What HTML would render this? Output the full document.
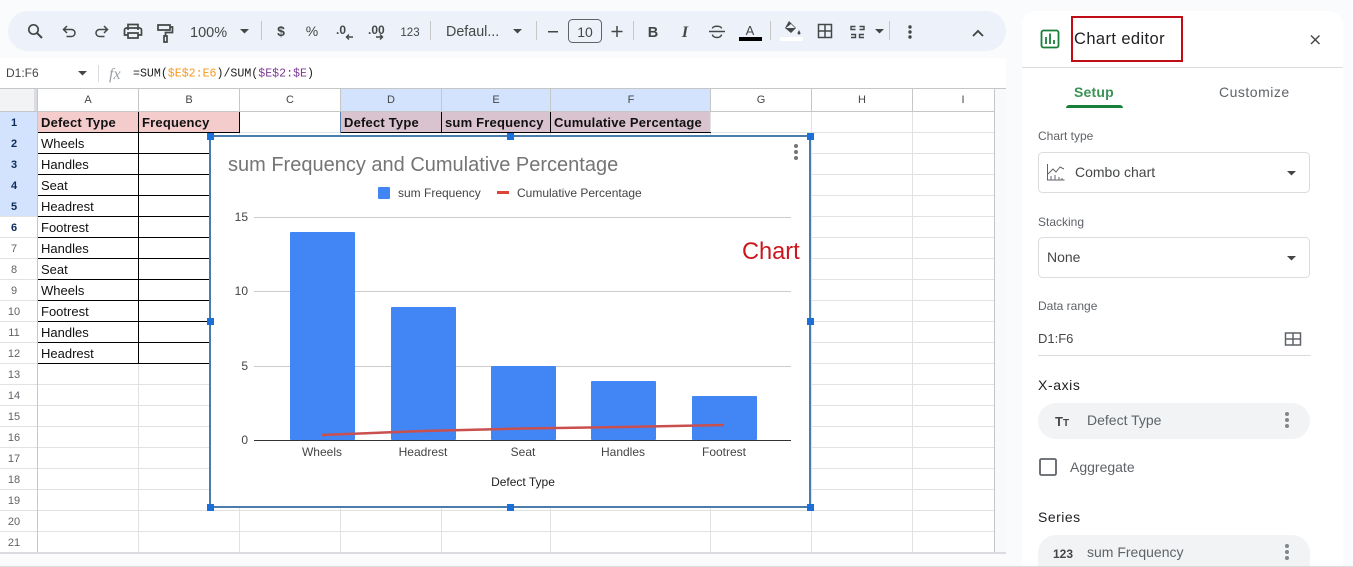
<!DOCTYPE html>
<html><head><meta charset="utf-8"><style>
html,body{margin:0;padding:0;background:#f9fbfd;width:1353px;height:567px;overflow:hidden}
svg{display:block;font-family:"Liberation Sans",sans-serif}
.hd{font-size:11px;fill:#444746;text-anchor:middle}
.rn{font-size:11px;fill:#5f6368;text-anchor:middle}
.rb{font-size:11px;fill:#0b2a5a;font-weight:bold;text-anchor:middle}
.c{font-size:13px;fill:#111}
.cb{font-size:13px;fill:#111;font-weight:bold;letter-spacing:.2px}
.ic{fill:none;stroke:#444746;stroke-width:1.7}
.lb{font-size:12px;fill:#5f6368}
.ax{font-size:12px;fill:#444}
</style></head><body>
<svg width="1353" height="567" viewBox="0 0 1353 567" xmlns="http://www.w3.org/2000/svg">
<rect width="1353" height="567" fill="#f9fbfd"/>
<!-- toolbar -->
<rect x="8" y="11" width="998" height="40" rx="20" fill="#edf2fa"/>
<g class="ic">
<circle cx="33.5" cy="29.5" r="4.7"/><path d="M37 33l5 5" stroke-width="2"/>
<path d="M67 26l-3.500 3.500 3.500 3.500M64 29.500h7.500a3.500 3.500 0 0 1 0 7h-5" stroke-width="1.500"/>
<path d="M104 26l3.500 3.500-3.500 3.500M107 29.500h-7.500a3.500 3.500 0 0 0 0 7h5" stroke-width="1.500"/>
<path d="M128 30v-5.500h10v5.500M128 35h-3.500v-5a2 2 0 0 1 2-2h13a2 2 0 0 1 2 2v5H138M128 33h10v5h-10z"/>
<path d="M158 25h12v5h-12zM170 27h2.500v5.500h-7v3.500M164 36h3v6h-3z"/>
</g>
<text x="190" y="37" font-size="14.500" fill="#444746">100%</text>
<path d="M240 29h9l-4.500 4.500z" fill="#444746"/>
<rect x="261" y="21" width="1" height="19" fill="#c7c7c7"/>
<text x="281" y="36" font-size="14" font-weight="bold" fill="#444746" text-anchor="middle">$</text>
<text x="312" y="36" font-size="14" fill="#444746" text-anchor="middle">%</text>
<text x="336" y="34" font-size="12" font-weight="bold" fill="#444746">.0</text>
<path d="M353 37h-6M349 34.500l-2.500 2.500 2.500 2.500" fill="none" stroke="#444746" stroke-width="1.400"/>
<text x="368" y="34" font-size="12" font-weight="bold" fill="#444746">.00</text>
<path d="M376 37h6M380 34.500l2.500 2.500-2.500 2.500" fill="none" stroke="#444746" stroke-width="1.400"/>
<text x="410" y="36" font-size="11.500" fill="#444746" text-anchor="middle">123</text>
<rect x="430" y="21" width="1" height="19" fill="#c7c7c7"/>
<text x="446" y="36" font-size="14.300" fill="#444746">Defaul...</text>
<path d="M513 29h9l-4.500 4.500z" fill="#444746"/>
<rect x="536" y="21" width="1" height="19" fill="#c7c7c7"/>
<rect x="548" y="31" width="10" height="1.500" fill="#444746"/>
<rect x="568.500" y="19.500" width="33" height="23" rx="4" fill="none" stroke="#5f6368"/>
<text x="585" y="37" font-size="14" fill="#444746" text-anchor="middle">10</text>
<path d="M617 26v11M611.500 31.500h11" stroke="#444746" stroke-width="1.500" fill="none"/>
<rect x="633" y="21" width="1" height="19" fill="#c7c7c7"/>
<text x="653" y="37" font-size="14.500" font-weight="bold" fill="#444746" text-anchor="middle">B</text>
<text x="685" y="37" font-size="16" font-weight="bold" font-style="italic" font-family="Liberation Serif" fill="#444746" text-anchor="middle">I</text>
<path d="M709 31.500h16M712.500 28.500c0-3 9-3 9 0M712.500 34.500c0 4 9 4 9 0" stroke="#444746" stroke-width="1.400" fill="none"/>
<text x="750" y="35" font-size="13" fill="#444746" text-anchor="middle">A</text>
<rect x="739" y="37" width="23" height="4" fill="#000"/>
<rect x="770" y="21" width="1" height="19" fill="#c7c7c7"/>
<path d="M789 21l7 7-5 5-6-5zM799 30l1.500 3a1.500 1.500 0 1 1-3 0z" fill="#444746"/>
<path d="M786 28l5-4 4 4z" fill="#edf2fa"/>
<rect x="780" y="37" width="23" height="4" rx="1" fill="#fff"/>
<path d="M818.500 24.500h13v13h-13zM825 24.500v13M818.500 31h13" stroke="#444746" stroke-width="1.500" fill="none"/>
<path d="M855.500 26.500h-4.500v3h4.500M851 37.500h4.500v-3h-4.500M859.500 26.500h4.500v3h-4.500M864 37.500h-4.500v-3h4.500" stroke="#444746" stroke-width="1.400" fill="none"/>
<path d="M875 29h9l-4.500 4.500z" fill="#444746"/>
<rect x="889" y="21" width="1" height="19" fill="#c7c7c7"/>
<g fill="#444746"><circle cx="910" cy="27" r="1.700"/><circle cx="910" cy="32" r="1.700"/><circle cx="910" cy="37" r="1.700"/></g>
<path d="M973 36l5-5 5 5" stroke="#444746" stroke-width="1.900" fill="none"/>

<!-- formula bar -->
<rect x="0" y="58" width="1006" height="30" fill="#fff"/>
<text x="6" y="77" font-size="12" fill="#444746">D1:F6</text>
<path d="M78 71h9l-4.500 4.500z" fill="#444746"/>
<rect x="98" y="65" width="1" height="17" fill="#dadce0"/>
<text x="109" y="79" font-size="16" font-style="italic" font-family="Liberation Serif" fill="#9aa0a6">fx</text>
<text x="133" y="76.500" font-family="Liberation Mono" font-size="11.600" fill="#222">=SUM(<tspan fill="#f7981d">$E$2:E6</tspan>)/SUM(<tspan fill="#7e3794">$E$2:$E</tspan>)</text>

<!-- sheet -->
<rect x="0" y="88" width="995" height="465" fill="#fff"/>
<rect x="995" y="88" width="11" height="465" fill="#f8f9fa"/>
<rect x="0" y="88" width="34" height="23" fill="#f1f3f4"/>
<rect x="34" y="88" width="4" height="23" fill="#dadce0"/>
<rect x="341" y="89" width="370" height="22" fill="#d3e3fd"/>
<rect x="0" y="111" width="37" height="105" fill="#d3e3fd"/>
<rect x="0" y="88" width="1006" height="1" fill="#c4c7c5"/>
<rect x="0" y="111" width="995" height="1" fill="#c4c7c5"/>
<g fill="#c4c7c5">
<rect x="138" y="89" width="1" height="22"/><rect x="239" y="89" width="1" height="22"/><rect x="340" y="89" width="1" height="22"/><rect x="441" y="89" width="1" height="22"/><rect x="550" y="89" width="1" height="22"/><rect x="710" y="89" width="1" height="22"/><rect x="811" y="89" width="1" height="22"/><rect x="912" y="89" width="1" height="22"/><rect x="994" y="89" width="1" height="464"/>
<rect x="37" y="89" width="1" height="464"/>
</g>
<!-- grid -->
<g fill="#e1e3e1">
<rect x="0" y="216" width="37" height="1"/><rect x="0" y="237" width="37" height="1"/><rect x="0" y="258" width="37" height="1"/><rect x="0" y="279" width="37" height="1"/><rect x="0" y="300" width="37" height="1"/><rect x="0" y="321" width="37" height="1"/><rect x="0" y="342" width="37" height="1"/>
<rect x="0" y="363" width="37" height="1"/><rect x="0" y="384" width="37" height="1"/><rect x="0" y="405" width="37" height="1"/><rect x="0" y="426" width="37" height="1"/><rect x="0" y="447" width="37" height="1"/><rect x="0" y="468" width="37" height="1"/><rect x="0" y="489" width="37" height="1"/><rect x="0" y="510" width="37" height="1"/><rect x="0" y="531" width="37" height="1"/>
<rect x="38" y="132" width="956" height="1"/><rect x="38" y="153" width="956" height="1"/><rect x="38" y="174" width="956" height="1"/><rect x="38" y="195" width="956" height="1"/><rect x="38" y="216" width="956" height="1"/><rect x="38" y="237" width="956" height="1"/><rect x="38" y="258" width="956" height="1"/><rect x="38" y="279" width="956" height="1"/><rect x="38" y="300" width="956" height="1"/><rect x="38" y="321" width="956" height="1"/><rect x="38" y="342" width="956" height="1"/><rect x="38" y="363" width="956" height="1"/><rect x="38" y="384" width="956" height="1"/><rect x="38" y="405" width="956" height="1"/><rect x="38" y="426" width="956" height="1"/><rect x="38" y="447" width="956" height="1"/><rect x="38" y="468" width="956" height="1"/><rect x="38" y="489" width="956" height="1"/><rect x="38" y="510" width="956" height="1"/><rect x="38" y="531" width="956" height="1"/>
<rect x="138" y="112" width="1" height="441"/><rect x="239" y="112" width="1" height="441"/><rect x="340" y="112" width="1" height="441"/><rect x="441" y="112" width="1" height="441"/><rect x="550" y="112" width="1" height="441"/><rect x="710" y="112" width="1" height="441"/><rect x="811" y="112" width="1" height="441"/><rect x="912" y="112" width="1" height="441"/>
</g>
<!-- headers -->
<text class="hd" x="88" y="103">A</text><text class="hd" x="189" y="103">B</text><text class="hd" x="290" y="103">C</text><text class="hd" x="391" y="103" fill="#0b2a5a">D</text><text class="hd" x="496" y="103">E</text><text class="hd" x="631" y="103">F</text><text class="hd" x="761" y="103">G</text><text class="hd" x="862" y="103">H</text><text class="hd" x="963" y="103">I</text>
<text class="rb" x="14" y="126">1</text><text class="rb" x="14" y="147">2</text><text class="rb" x="14" y="168">3</text><text class="rb" x="14" y="189">4</text><text class="rb" x="14" y="210">5</text><text class="rb" x="14" y="231">6</text>
<text class="rn" x="14" y="252">7</text><text class="rn" x="14" y="273">8</text><text class="rn" x="14" y="294">9</text><text class="rn" x="14" y="315">10</text><text class="rn" x="14" y="336">11</text><text class="rn" x="14" y="357">12</text><text class="rn" x="14" y="378">13</text><text class="rn" x="14" y="399">14</text><text class="rn" x="14" y="420">15</text><text class="rn" x="14" y="441">16</text><text class="rn" x="14" y="462">17</text><text class="rn" x="14" y="483">18</text><text class="rn" x="14" y="504">19</text><text class="rn" x="14" y="525">20</text><text class="rn" x="14" y="546">21</text>
<!-- fills -->
<rect x="38" y="112" width="201" height="20" fill="#f4cccc"/>
<rect x="341" y="112" width="369" height="20" fill="#d9c3cf"/>
<rect x="340" y="112" width="1" height="21" fill="#5a7fb0"/>
<g fill="#000">
<rect x="38" y="132" width="201" height="1"/><rect x="341" y="132" width="370" height="1"/>
<rect x="138" y="112" width="1" height="252"/><rect x="239" y="112" width="1" height="21"/><rect x="441" y="112" width="1" height="21"/><rect x="550" y="112" width="1" height="21"/>
<rect x="38" y="153" width="172" height="1"/><rect x="38" y="174" width="172" height="1"/><rect x="38" y="195" width="172" height="1"/><rect x="38" y="216" width="172" height="1"/><rect x="38" y="237" width="172" height="1"/><rect x="38" y="258" width="172" height="1"/><rect x="38" y="279" width="172" height="1"/><rect x="38" y="300" width="172" height="1"/><rect x="38" y="321" width="172" height="1"/><rect x="38" y="342" width="172" height="1"/><rect x="38" y="363" width="172" height="1"/>
</g>
<text class="cb" x="41" y="127">Defect Type</text><text class="cb" x="142" y="127">Frequency</text><text class="cb" x="344" y="127">Defect Type</text><text class="cb" x="445" y="127">sum Frequency</text><text class="cb" x="554" y="127">Cumulative Percentage</text>
<text class="c" x="41" y="148">Wheels</text><text class="c" x="41" y="169">Handles</text><text class="c" x="41" y="190">Seat</text><text class="c" x="41" y="211">Headrest</text><text class="c" x="41" y="232">Footrest</text><text class="c" x="41" y="253">Handles</text><text class="c" x="41" y="274">Seat</text><text class="c" x="41" y="295">Wheels</text><text class="c" x="41" y="316">Footrest</text><text class="c" x="41" y="337">Handles</text><text class="c" x="41" y="358">Headrest</text>
<!-- bottom strip -->
<rect x="0" y="552" width="1006" height="2" fill="#dadce0"/>
<rect x="0" y="554" width="1006" height="12" fill="#fbfbfb"/>
<rect x="0" y="566" width="1353" height="1" fill="#dadce0"/>
<!-- chart -->
<rect x="210" y="136" width="600" height="371" fill="#fff" stroke="#4a7dab" stroke-width="2"/>
<text x="228" y="171" font-size="20" fill="#757575">sum Frequency and Cumulative Percentage</text>
<g fill="#757575"><circle cx="796" cy="146" r="2"/><circle cx="796" cy="152" r="2"/><circle cx="796" cy="158" r="2"/></g>
<rect x="378" y="187" width="12" height="12" rx="1" fill="#4285f4"/>
<text class="ax" x="398" y="197" fill="#333">sum Frequency</text>
<rect x="497" y="191" width="12" height="3" fill="#db4437"/>
<text class="ax" x="517" y="197">Cumulative Percentage</text>
<g fill="#ccc"><rect x="254" y="217" width="537" height="1"/><rect x="254" y="291" width="537" height="1"/><rect x="254" y="366" width="537" height="1"/></g>
<g class="ax" text-anchor="end"><text x="248" y="221">15</text><text x="248" y="295">10</text><text x="248" y="370">5</text><text x="248" y="444">0</text></g>
<g fill="#4285f4"><rect x="290" y="232" width="65" height="208" rx="1"/><rect x="391" y="307" width="65" height="133" rx="1"/><rect x="491" y="366" width="65" height="74" rx="1"/><rect x="591" y="381" width="65" height="59" rx="1"/><rect x="692" y="396" width="65" height="44" rx="1"/></g>
<rect x="254" y="440" width="537" height="1" fill="#333"/>
<path d="M322 435L423 431 523 428.500 623 427 724 425" fill="none" stroke="#c9504f" stroke-width="2.500"/>
<g class="ax" text-anchor="middle"><text x="322" y="456">Wheels</text><text x="423" y="456">Headrest</text><text x="523" y="456">Seat</text><text x="623" y="456">Handles</text><text x="724" y="456">Footrest</text><text x="523" y="486" fill="#222">Defect Type</text></g>
<text x="742" y="259" font-size="23.600" fill="#c9181e">Chart</text>
<g fill="#1a6fd8"><rect x="207" y="133" width="7" height="7"/><rect x="507" y="133" width="7" height="7"/><rect x="807" y="133" width="7" height="7"/><rect x="207" y="318" width="7" height="7"/><rect x="807" y="318" width="7" height="7"/><rect x="207" y="504" width="7" height="7"/><rect x="507" y="504" width="7" height="7"/><rect x="807" y="504" width="7" height="7"/></g>

<!-- side panel -->
<path d="M1022 566V25a14 14 0 0 1 14-14h293a14 14 0 0 1 14 14v541z" fill="#fff"/>
<rect x="1022" y="67" width="321" height="1" fill="#dadce0"/>
<rect x="1041.500" y="30.500" width="17" height="17" rx="2" fill="none" stroke="#188038" stroke-width="1.800"/>
<path d="M1046 37v7M1050 33.500v10.500M1054 40v4" stroke="#188038" stroke-width="1.800"/>
<text x="1074" y="44" font-size="16.500" fill="#202124" letter-spacing=".4">Chart editor</text>
<rect x="1072" y="17" width="110" height="44" fill="none" stroke="#c00c14" stroke-width="2"/>
<path d="M1311 35.500l8.500 8.500M1319.500 35.500l-8.500 8.500" stroke="#444746" stroke-width="1.400"/>
<text x="1074" y="97" font-size="14" font-weight="bold" fill="#188038" opacity=".85" letter-spacing=".2">Setup</text>
<path d="M1066 108a3 3 0 0 1 3-3h51a3 3 0 0 1 3 3z" fill="#188038"/>
<text x="1219" y="97" font-size="14" fill="#5f6368" letter-spacing=".5">Customize</text>
<text class="lb" x="1038" y="140">Chart type</text>
<rect x="1038.500" y="152.500" width="271" height="40" rx="4" fill="#fff" stroke="#dadce0"/>
<path d="M1047.500 164v16h17M1048 174l5-5 3 3 4-5 4 2M1051 180v-4M1055 180v-5M1059 180v-3M1062 180v-2" fill="none" stroke="#5f6368" stroke-width="1"/>
<text x="1075" y="177" font-size="14" fill="#444746">Combo chart</text>
<path d="M1287 171h9l-4.500 4.500z" fill="#444746"/>
<text class="lb" x="1038" y="226">Stacking</text>
<rect x="1038.500" y="237.500" width="271" height="40" rx="4" fill="#fff" stroke="#dadce0"/>
<text x="1047" y="262" font-size="14" fill="#444746">None</text>
<path d="M1287 256h9l-4.500 4.500z" fill="#444746"/>
<text class="lb" x="1038" y="310">Data range</text>
<text x="1038" y="343" font-size="13" fill="#444746">D1:F6</text>
<path d="M1285.500 333h15v12h-15zM1293 333v12M1285.500 339h15" fill="none" stroke="#5f6368" stroke-width="1.500"/>
<rect x="1038" y="355" width="273" height="1" fill="#dadce0"/>
<text x="1038" y="390" font-size="14" fill="#202124" letter-spacing=".6">X-axis</text>
<rect x="1038" y="403" width="272" height="36" rx="18" fill="#f1f3f4"/>
<text x="1055" y="426" font-size="13" font-weight="bold" fill="#444746">T<tspan font-size="10">T</tspan></text>
<text x="1087" y="425" font-size="14" fill="#5f6368">Defect Type</text>
<g fill="#80868b"><circle cx="1287" cy="414" r="2"/><circle cx="1287" cy="420" r="2"/><circle cx="1287" cy="426" r="2"/></g>
<rect x="1040" y="459" width="16" height="16" rx="1.500" fill="none" stroke="#5f6368" stroke-width="1.800"/>
<text x="1070" y="472" font-size="14" fill="#5f6368">Aggregate</text>
<text x="1038" y="522" font-size="14" fill="#202124" letter-spacing=".5">Series</text>
<path d="M1038 553a18 18 0 0 1 18-18h236a18 18 0 0 1 18 18v13h-272z" fill="#f1f3f4"/>
<text x="1053" y="558" font-size="12" font-weight="bold" fill="#444746">123</text>
<text x="1087" y="557" font-size="14" fill="#5f6368">sum Frequency</text>
<g fill="#80868b"><circle cx="1287" cy="546" r="2"/><circle cx="1287" cy="552" r="2"/><circle cx="1287" cy="558" r="2"/></g>
<rect x="1022" y="566" width="321" height="1" fill="#dadce0"/>
</svg>
</body></html>
